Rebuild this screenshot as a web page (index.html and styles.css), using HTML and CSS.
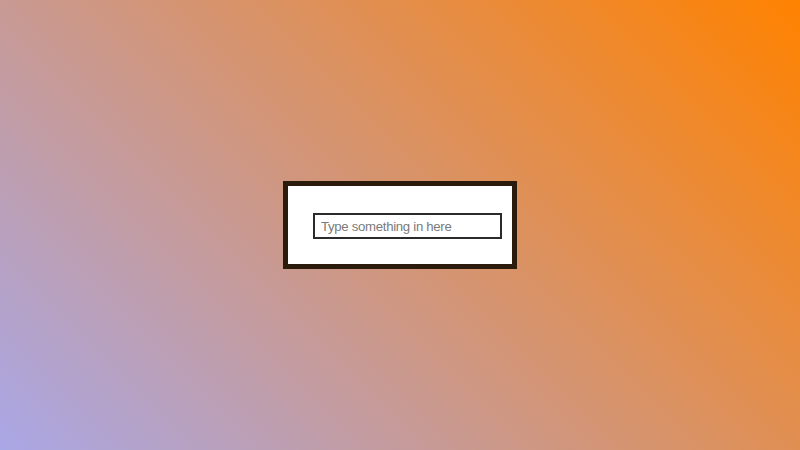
FILE: index.html
```html
<!DOCTYPE html>
<html>
<head>
<meta charset="utf-8">
<link rel="stylesheet" href="styles.css">
</head>
<body>
<div class="box">
  <input class="field" type="text" placeholder="Type something in here">
</div>
</body>
</html>
```
FILE: styles.css
```css
html, body {
  margin: 0;
  height: 100%;
}
body {
  background: linear-gradient(45deg, #a9a7e6, #ff8200);
  display: flex;
  align-items: center;
  justify-content: center;
  font-family: "Liberation Sans", Arial, sans-serif;
}
.box {
  background: #fff;
  border: 5px solid #2a1b0c;
  padding: 27px 10px 25px 25px;
  display: flex;
}
.field {
  box-sizing: border-box;
  width: 189px;
  height: 26px;
  border: 2px solid #2b2b2b;
  padding: 0 6px;
  margin: 0;
  font-family: "Liberation Sans", Arial, sans-serif;
  font-size: 13.2px;
  letter-spacing: -0.3px;
  color: #222;
  background: #fff;
  outline: none;
}
.field::placeholder {
  color: #7a7a7a;
}
```
